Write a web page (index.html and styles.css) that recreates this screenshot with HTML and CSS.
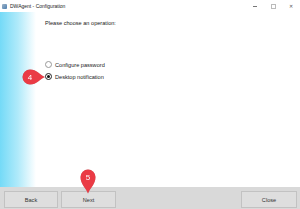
FILE: index.html
```html
<!DOCTYPE html>
<html>
<head>
<meta charset="utf-8">
<link rel="stylesheet" href="styles.css">
</head>
<body>
<div class="window">
  <div class="titlebar">
    <span class="app-icon"></span>
    <span class="title">DWAgent - Configuration</span>
    <span class="spacer"></span>
    <span class="ctl ctl-min"></span>
    <span class="ctl ctl-max"></span>
    <span class="ctl ctl-close">&#x2715;</span>
  </div>
  <div class="main">
    <div class="side"></div>
    <div class="content">
      <div class="prompt">Please choose an operation:</div>
      <div class="options">
        <div class="option"><span class="radio"></span><span class="label">Configure password</span></div>
        <div class="option"><span class="radio checked"></span><span class="label">Desktop notification</span></div>
      </div>
    </div>
  </div>
  <div class="footer">
    <div class="btn btn-back">Back</div>
    <div class="btn btn-next">Next</div>
    <div class="grow"></div>
    <div class="btn btn-close">Close</div>
  </div>
  <svg class="badge badge-4" width="24" height="16" viewBox="0 0 24 16">
    <path d="M23 8 C 17 5.5, 15 0.5, 8 0.5 A 7.5 7.5 0 1 0 8 15.5 C 15 15.5, 17 10.5, 23 8 Z" fill="#ea3b45"/>
    <text x="8" y="11" text-anchor="middle" class="badge-text">4</text>
  </svg>
  <svg class="badge badge-5" width="16" height="25" viewBox="0 0 16 25">
    <path d="M8 24.5 C 5.5 18, 0.5 15.5, 0.5 8 A 7.5 7.5 0 1 1 15.5 8 C 15.5 15.5, 10.5 18, 8 24.5 Z" fill="#ea3b45"/>
    <text x="8" y="11" text-anchor="middle" class="badge-text">5</text>
  </svg>
</div>
</body>
</html>
```
FILE: styles.css
```css
html, body {
  margin: 0;
  padding: 0;
  background: #ffffff;
}
.window {
  position: relative;
  width: 300px;
  height: 209px;
  display: flex;
  flex-direction: column;
  font-family: "Liberation Sans", Arial, sans-serif;
  overflow: hidden;
  background: #ffffff;
}
.titlebar {
  height: 12px;
  flex: 0 0 12px;
  display: flex;
  align-items: center;
  padding-left: 2px;
  padding-right: 6px;
}
.app-icon {
  width: 5px;
  height: 5px;
  background: linear-gradient(135deg, #9fb4c8, #4d7fb0);
  border-radius: 1px;
  margin-right: 3px;
}
.title {
  font-size: 5px;
  color: #222;
}
.spacer { flex: 1; }
.ctl {
  width: 6px;
  height: 6px;
  display: flex;
  align-items: center;
  justify-content: center;
  color: #555;
}
.ctl-min {
  margin-right: 12px;
}
.ctl-min::before {
  content: "";
  width: 4px;
  height: 0;
  border-top: 1px solid #777;
}
.ctl-max {
  margin-right: 12px;
}
.ctl-max::before {
  content: "";
  width: 3px;
  height: 3px;
  border: 1px solid #bbb;
}
.ctl-close {
  font-size: 5px;
  line-height: 6px;
}
.main {
  flex: 1;
  display: flex;
}
.side {
  width: 36px;
  background: linear-gradient(to right, #74daf7 0%, #b0eafa 50%, #ffffff 100%);
}
.content {
  flex: 1;
  padding-left: 9px;
  padding-top: 8px;
}
.prompt {
  font-size: 5.6px;
  color: #222;
  line-height: 7px;
}
.options {
  margin-top: 34px;
  display: flex;
  flex-direction: column;
  gap: 5px;
}
.option {
  display: flex;
  align-items: center;
  height: 7px;
}
.radio {
  width: 5px;
  height: 5px;
  border: 1px solid #999;
  border-radius: 50%;
  margin-right: 3px;
  display: flex;
  align-items: center;
  justify-content: center;
  background: #fff;
}
.radio.checked {
  border-color: #222;
}
.radio.checked::before {
  content: "";
  width: 3px;
  height: 3px;
  border-radius: 50%;
  background: #111;
}
.label {
  font-size: 5.6px;
  color: #222;
}
.footer {
  flex: 0 0 22px;
  height: 22px;
  background: #d9d9d9;
  display: flex;
  align-items: flex-start;
  padding: 4px 3px 0 4px;
  box-sizing: border-box;
  gap: 3px;
}
.btn {
  height: 17px;
  box-sizing: border-box;
  border: 1px solid #c2c2c2;
  background: #dedede;
  font-size: 5.6px;
  color: #333;
  display: flex;
  align-items: center;
  justify-content: center;
}
.btn-back { width: 54px; }
.btn-next { width: 55px; }
.btn-close { width: 56px; }
.grow { flex: 1; }
.badge {
  position: absolute;
  filter: drop-shadow(0 0.5px 0.5px rgba(0,0,0,0.25));
}
.badge-4 {
  left: 22px;
  top: 69px;
}
.badge-5 {
  left: 80px;
  top: 169px;
}
.badge-text {
  font-family: "Liberation Sans", Arial, sans-serif;
  font-size: 8px;
  fill: #ffffff;
}
```
